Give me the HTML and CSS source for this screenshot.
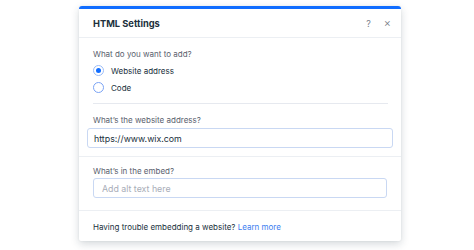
FILE: index.html
```html
<!DOCTYPE html>
<html>
<head>
<meta charset="utf-8">
<link rel="stylesheet" href="styles.css">
</head>
<body>
<div class="panel">
  <div class="header">
    <span class="title">HTML Settings</span>
    <span class="actions"><span class="help">?</span><span class="close">×</span></span>
  </div>
  <div class="section first">
    <div class="label">What do you want to add?</div>
    <div class="radio-row top"><span class="radio on"></span><span>Website address</span></div>
    <div class="radio-row"><span class="radio"></span><span>Code</span></div>
  </div>
  <div class="section address">
    <div class="label">What’s the website address?</div>
    <div class="input big">https://www.wix.com</div>
  </div>
  <div class="section embed">
    <div class="label">What’s in the embed?</div>
    <div class="input placeholder">Add alt text here</div>
  </div>
  <div class="footer">Having trouble embedding a website? <span class="link">Learn more</span></div>
</div>
</body>
</html>
```
FILE: styles.css
```css
html, body { margin: 0; padding: 0; background: #ffffff; }
body { font-family: Inter, "Noto Sans", sans-serif; color: #20303c; width: 474px; height: 250px; overflow: hidden; }
.panel {
  margin: 6px 0 0 79px;
  width: 322px;
  background: #fff;
  border-top: 3px solid #116dff;
  border-radius: 3px 3px 2px 2px;
  box-shadow: 0 3px 9px rgba(22, 45, 61, 0.18), 0 0 2px rgba(22, 45, 61, 0.08);
}
.header {
  height: 28px;
  display: flex;
  align-items: center;
  justify-content: space-between;
  padding: 0 10px 0 14px;
  border-bottom: 1px solid #eceff3;
}
.title { font-size: 9.3px; font-weight: 700; }
.actions { display: flex; gap: 13px; align-items: center; color: #7a808c; font-size: 9px; }
.close { font-size: 11px; font-weight: 300; color: #6f7682; }
.section.first { margin: 0 13px 0 14px; padding: 9px 0 7px; border-bottom: 1px solid #e6e9ef; }
.label { font-size: 8px; line-height: 14px; color: #5a616e; }
.radio-row { display: flex; align-items: center; height: 17px; font-size: 8px; }
.radio-row.top { margin-top: 1px; }
.radio {
  width: 9px; height: 9px; border-radius: 50%;
  border: 1px solid #7aa3f5;
  margin: 0 7px 0 0;
  position: relative;
}
.radio.on { border-color: #9bbcf8; }
.radio.on::after {
  content: ""; position: absolute; left: 2px; top: 2px; width: 5px; height: 5px; border-radius: 50%; background: #116dff;
}
.section.address { padding: 9px 8px 8px 14px; border-bottom: 1px solid #eceff3; }
.section.address .input { margin: 1px 0 0 -6px; height: 20px; padding-left: 6px; font-size: 8.8px; }
.input {
  box-sizing: border-box;
  border: 1px solid #c9d8f3;
  border-radius: 3px;
  display: flex; align-items: center;
}
.section.embed { padding: 7px 14px 12px 14px; border-bottom: 1px solid #eceff3; }
.section.embed .input { margin-top: 0; height: 20px; padding-left: 8px; font-size: 8.8px; color: #a8adb8; }
.footer { padding: 9px 14px 7px; line-height: 14px; font-size: 8px; }
.link { color: #3b7ef0; }
```
